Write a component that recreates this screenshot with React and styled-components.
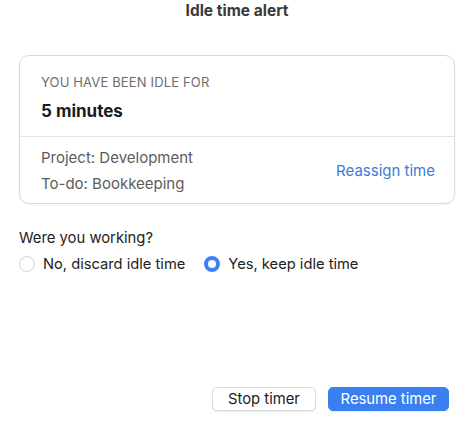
import styled, { createGlobalStyle } from "styled-components";

const Global = createGlobalStyle`
  html, body {
    margin: 0;
    padding: 0;
    background: #ffffff;
  }
  body {
    font-family: Inter, "Liberation Sans", Arial, sans-serif;
    -webkit-font-smoothing: antialiased;
  }
`

const Janela = styled.div`
  width: 474px;
  height: 441px;
  box-sizing: border-box;
  padding: 0 19px 30px;
  display: flex;
  flex-direction: column;
  background: #ffffff;
`

const Titulo = styled.h1`
  margin: 0;
  padding-top: 1px;
  height: 55px;
  box-sizing: border-box;
  font-size: 15.5px;
  font-weight: 700;
  color: #3a3a3a;
  text-align: center;
  line-height: 20px;
`

const Card = styled.div`
  border: 1px solid #d9d9d9;
  border-radius: 10px;
  background: #fff;
  box-shadow: 0 1px 2px rgba(0, 0, 0, 0.04);
`

const Topo = styled.div`
  padding: 17px 21px 14px;
  border-bottom: 1px solid #e3e3e3;
`

const Rotulo = styled.div`
  font-size: 13px;
  color: #6d6d6d;
  line-height: 18px;
  letter-spacing: 0.15px;
`

const Tempo = styled.div`
  margin-top: 9px;
  font-size: 17px;
  font-weight: 700;
  color: #1a1a1a;
  line-height: 22px;
`

const Rodape = styled.div`
  padding: 11px 19px 9px 21px;
  display: flex;
  align-items: center;
  justify-content: space-between;
`

const Info = styled.div`
  display: flex;
  flex-direction: column;
  gap: 6px;
`

const Linha = styled.div`
  font-size: 15px;
  color: #5c5c5c;
  line-height: 20px;
`

const Link = styled.a`
  font-size: 15px;
  color: #3d7bd9;
  line-height: 20px;
  text-decoration: none;
  cursor: pointer;
`

const Pergunta = styled.div`
  margin-top: 24px;
  font-size: 14.8px;
  color: #222;
  line-height: 20px;
`

const Opcoes = styled.div`
  margin-top: 6px;
  display: flex;
  align-items: center;
  gap: 19px;
`

const Opcao = styled.label`
  display: flex;
  align-items: center;
  gap: 8px;
  font-size: 14.7px;
  color: #222;
  line-height: 20px;
  cursor: pointer;
`

const Radio = styled.span`
  width: 16px;
  height: 16px;
  box-sizing: border-box;
  border-radius: 50%;
  border: ${p => (p.$ativo ? "4.5px solid #3b82f0" : "1px solid #d6d6d6")};
  background: #fff;
  box-shadow: ${p => (p.$ativo ? "none" : "inset 0 1px 1px rgba(0,0,0,0.04)")};
`

const Acoes = styled.div`
  margin-top: auto;
  display: flex;
  justify-content: flex-end;
  gap: 12px;
  padding-right: 6px;
`

const Botao = styled.button`
  height: 24px;
  padding: 0;
  width: ${p => (p.$primario ? "121px" : "104px")};
  border-radius: 5px;
  font-family: inherit;
  font-size: 14.8px;
  line-height: 22px;
  cursor: pointer;
  color: ${p => (p.$primario ? "#fff" : "#222")};
  background: ${p => (p.$primario ? "#3a7ff0" : "#fff")};
  border: 1px solid ${p => (p.$primario ? "#3a7ff0" : "#dcdcdc")};
  box-shadow: 0 1px 1px rgba(0, 0, 0, 0.08);
`

export default function App() {
  return (
    <>
      <Global />
      <Janela>
        <Titulo>Idle time alert</Titulo>
        <Card>
          <Topo>
            <Rotulo>YOU HAVE BEEN IDLE FOR</Rotulo>
            <Tempo>5 minutes</Tempo>
          </Topo>
          <Rodape>
            <Info>
              <Linha>Project: Development</Linha>
              <Linha>To-do: Bookkeeping</Linha>
            </Info>
            <Link>Reassign time</Link>
          </Rodape>
        </Card>
        <Pergunta>Were you working?</Pergunta>
        <Opcoes>
          <Opcao>
            <Radio />
            No, discard idle time
          </Opcao>
          <Opcao>
            <Radio $ativo />
            Yes, keep idle time
          </Opcao>
        </Opcoes>
        <Acoes>
          <Botao>Stop timer</Botao>
          <Botao $primario>Resume timer</Botao>
        </Acoes>
      </Janela>
    </>
  );
}
